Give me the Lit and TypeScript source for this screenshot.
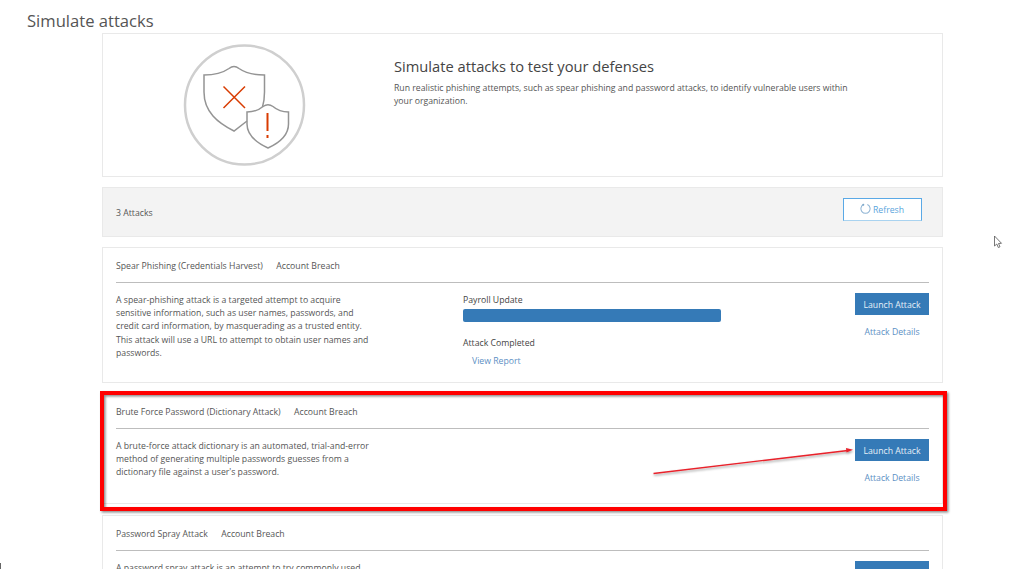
import { LitElement, html, css } from "lit";
import { customElement } from "lit/decorators.js";

@customElement("app-root")
export class AppRoot extends LitElement {
  static styles = css`
    :host {
      display: block;
      position: relative;
      width: 1024px;
      height: 569px;
      overflow: hidden;
      background: #fff;
      font-family: "Open Sans", "Noto Sans", sans-serif;
      color: #555;
      font-size: 8.7px;
    }
    .title {
      margin: 0;
      padding: 9px 0 0 27px;
      height: 33px;
      box-sizing: border-box;
      font-size: 16.6px;
      line-height: 24px;
      font-weight: 400;
      color: #555;
    }
    .wrap {
      margin-left: 102px;
      width: 841px;
      display: flex;
      flex-direction: column;
    }
    .hero {
      height: 144px;
      box-sizing: border-box;
      border: 1px solid #e9e9e9;
      display: flex;
      padding: 9px 0 0 79px;
      margin-bottom: 10px;
    }
    .hero svg { width: 124px; height: 124px; flex: none; }
    .hero-text { margin-left: 88px; width: 456px; padding-top: 13px; }
    .hero-text h2 {
      margin: 0 0 6px;
      font-size: 14.7px;
      line-height: 20px;
      font-weight: 400;
      color: #444;
    }
    .hero-text p { margin: 0; line-height: 13px; }
    .bar {
      height: 50px;
      box-sizing: border-box;
      background: #f3f3f3;
      border: 1px solid #e9e9e9;
      display: flex;
      align-items: center;
      justify-content: space-between;
      padding: 0 20px 0 13px;
      margin-bottom: 10px;
    }
    .count { padding-top: 1px; }
    .refresh {
      width: 79px;
      height: 23px;
      margin-bottom: 5px;
      box-sizing: border-box;
      background: #fff;
      border: 1px solid #5aa9e6;
      border-bottom-color: #a9d3f0;
      color: #5aa5dc;
      display: flex;
      align-items: center;
      justify-content: center;
      gap: 2px;
      padding-right: 1px;
    }
    .refresh svg { width: 11px; height: 11px; margin-top: -2px; }
    .card {
      box-sizing: border-box;
      border: 1px solid #e9e9e9;
      padding: 0 13px;
      margin-bottom: 11px;
    }
    .card.first { height: 136px; margin-bottom: 10px; }
    .card.second { height: 111px; }
    .head {
      height: 35px;
      box-sizing: border-box;
      border-bottom: 1px solid #bdbdbd;
      padding-top: 1px;
      display: flex;
      align-items: center;
      gap: 13.500px;
    }
    .body {
      display: grid;
      grid-template-columns: 347px 258px 1fr;
      padding-top: 10px;
    }
    .desc { margin: 1px 0 0; width: 258px; line-height: 13.2px; }
    .run-name { margin-top: 1px; line-height: 13px; color: #444; }
    .progress {
      height: 13px;
      margin: 2px 0 15px;
      background: #357ab7;
      border-radius: 2px;
    }
    .done { line-height: 13px; color: #444; }
    a { color: #5c8fc4; text-decoration: none; }
    .report { display: block; margin: 5px 0 0 9px; line-height: 13px; }
    .actions {
      justify-self: end;
      width: 74px;
      display: flex;
      flex-direction: column;
      align-items: center;
    }
    .launch {
      width: 74px;
      height: 22px;
      padding-top: 1px;
      box-sizing: border-box;
      background: #357ab7;
      color: #e6f0f8;
      display: flex;
      align-items: center;
      justify-content: center;
    }
    .details { margin-top: 11px; line-height: 13px; }
    .annot { position: absolute; inset: 0; width: 1024px; height: 569px; pointer-events: none; }
  `;

  private card(cls: string, name: string, desc: string, run: boolean) {
    return html`<section class="card ${cls}">
      <div class="head"><span>${name}</span><span>Account Breach</span></div>
      <div class="body">
        <p class="desc">${desc}</p>
        <div>
          ${run
            ? html`<div class="run-name">Payroll Update</div>
                <div class="progress"></div>
                <div class="done">Attack Completed</div>
                <a class="report">View Report</a>`
            : ""}
        </div>
        <div class="actions">
          <div class="launch">Launch Attack</div>
          <a class="details">Attack Details</a>
        </div>
      </div>
    </section>`;
  }

  render() {
    return html`
      <h1 class="title">Simulate attacks</h1>
      <div class="wrap">
        <section class="hero">
          <svg viewBox="182 43 124 124" fill="none">
            <circle cx="244.500" cy="105" r="59.500" stroke="#cfcfcf" stroke-width="2.500"/>
            <path d="M247 121 L234 131 C218 123 204 112 204 92 L204 75 C214 75 224 72 229 68.500 C232 66 236 66 239 68.500 C244 72 254 75 264.500 75 L264.500 92 C264.500 97 264 102 262.500 107"
              stroke="#949494" stroke-width="1.500"/>
            <path d="M223.500 86.500 L245 108 M245 86.500 L223.500 108" stroke="#d83b01" stroke-width="1.500"/>
            <path d="M247 112 C253 112 259 110 263 106.500 C266 104.500 270 104.500 273 106.500 C277 110 283 112 288.500 112 L288.500 124 C288.500 136 279 143 268 148 C257 143 247 136 247 124 Z"
              stroke="#949494" stroke-width="1.500"/>
            <path d="M267.500 113 L267.500 131" stroke="#d83b01" stroke-width="2"/>
            <path d="M267.500 135 L267.500 138" stroke="#d83b01" stroke-width="2"/>
          </svg>
          <div class="hero-text">
            <h2>Simulate attacks to test your defenses</h2>
            <p>Run realistic phishing attempts, such as spear phishing and password attacks, to identify vulnerable users within your organization.</p>
          </div>
        </section>
        <div class="bar">
          <span class="count">3 Attacks</span>
          <div class="refresh">
            <svg viewBox="0 0 12 12" fill="none">
              <path d="M4 1.700 A5 5 0 1 0 8 1.700" stroke="#8fb4d4" stroke-width="1.100"/>
              <circle cx="3.600" cy="1.800" r="1.100" fill="#7fa8c9"/>
            </svg>
            <span>Refresh</span>
          </div>
        </div>
        ${this.card("first", "Spear Phishing (Credentials Harvest)", "A spear-phishing attack is a targeted attempt to acquire sensitive information, such as user names, passwords, and credit card information, by masquerading as a trusted entity. This attack will use a URL to attempt to obtain user names and passwords.", true)}
        ${this.card("second", "Brute Force Password (Dictionary Attack)", "A brute-force attack dictionary is an automated, trial-and-error method of generating multiple passwords guesses from a dictionary file against a user's password.", false)}
        ${this.card("", "Password Spray Attack", "A password spray attack is an attempt to try commonly used", false)}
      </div>
      <svg class="annot" viewBox="0 0 1024 569" fill="none">
        <defs>
          <filter id="s" x="-5%" y="-5%" width="110%" height="110%">
            <feDropShadow dx="1.500" dy="1.500" stdDeviation="1" flood-color="#000" flood-opacity="0.45"/>
          </filter>
          <filter id="a" x="-5%" y="-50%" width="110%" height="200%">
            <feDropShadow dx="0.500" dy="1.500" stdDeviation="0.800" flood-color="#000" flood-opacity="0.4"/>
          </filter>
        </defs>
        <rect x="102" y="393" width="843" height="116" stroke="#f00" stroke-width="4" filter="url(#s)"/>
        <g filter="url(#a)">
          <path d="M653.500 473.500 L848 450.500" stroke="#e8202a" stroke-width="1.300"/>
          <path d="M846 448 L853 449.800 L846.500 452.500 Z" fill="#e8202a"/>
        </g>
        <path d="M994.500 236 L994.500 246 L996.800 244 L998.300 247.500 L1000 246.800 L998.500 243.500 L1001.500 243.300 Z" fill="#fff" stroke="#555" stroke-width="0.800"/>
        <rect x="0" y="563" width="1" height="6" fill="#666"/>
      </svg>
    `;
  }
}
